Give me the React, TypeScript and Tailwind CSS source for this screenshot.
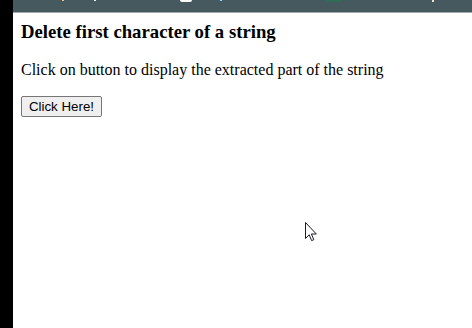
import React from "react";

const App = () => {
  return (
    <div className="flex h-[328px] w-[472px] overflow-hidden bg-white">
      {/* black edge on the left */}
      <div className="h-full w-[13px] shrink-0 bg-black" />

      <div className="relative flex-1">
        {/* top bar, cut off */}
        <div className="flex h-[13px] items-start border-b border-[#9eaaad] bg-[#46595e]">
          <span className="ml-[49px] h-[1px] w-[2px] bg-[#f4c27a]" />
          <span className="ml-[30px] h-[1px] w-[2px] bg-[#e8f0ff]" />
          <span className="ml-[84px] h-[2px] w-[12px] rounded-b bg-white" />
          <span className="ml-[28px] h-[1px] w-[2px] bg-[#9fd3ff]" />
          <span className="ml-[104px] h-[2px] w-[16px] bg-[#2f6b5b]" />
          <span className="ml-[90px] h-[2px] w-[2px] bg-[#f6e2c8]" />
        </div>

        <div className="pl-2" style={{ fontFamily: '"Liberation Serif", "Times New Roman", serif' }}>
          <h3 className="mt-[8px] text-[18.72px] font-bold leading-[21px] text-black">
            Delete first character of a string
          </h3>
          <p className="mt-[19px] text-[16px] leading-[18px] text-black">
            Click on button to display the extracted part of the string
          </p>
          <button
            className="mt-[17px] h-[21px] w-[81px] rounded-[2px] border border-[#767676] bg-[#efefef] text-[13.33px] leading-[15px] text-black"
            style={{ fontFamily: '"Liberation Sans", Arial, sans-serif' }}
          >
            Click Here!
          </button>
        </div>

        {/* mouse pointer */}
        <svg
          className="absolute left-[292px] top-[222px]"
          width="12"
          height="20"
          viewBox="0 0 12 20"
        >
          <path
            d="M0.5 0.5 L0.5 16.5 L4.2 12.8 L6.6 18.6 L8.8 17.7 L6.4 12 L11.3 12 Z"
            fill="white"
            stroke="#1a1a2e"
            strokeWidth="1"
            strokeLinejoin="miter"
          />
        </svg>
      </div>
    </div>
  );
};

export default App;
